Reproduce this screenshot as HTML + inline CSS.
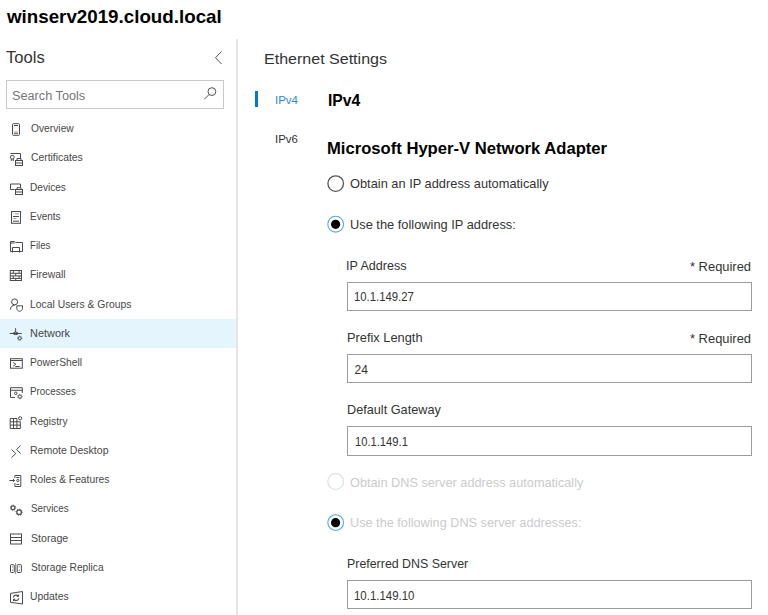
<!DOCTYPE html>
<html><head><meta charset="utf-8">
<style>
html,body{margin:0;padding:0;background:#fff;width:768px;height:615px;overflow:hidden;position:relative}
body{font-family:"Liberation Sans",sans-serif}
.t{position:absolute;white-space:nowrap}
svg{position:absolute;left:0;top:0}
</style></head><body>
<div style="position:absolute;left:0px;top:318.5px;width:236px;height:29.2px;background:#e5f5fe"></div>
<div style="position:absolute;left:236px;top:39px;width:2px;height:576px;background:#e6e6e6"></div>
<div style="position:absolute;left:5.5px;top:79.7px;width:218.5px;height:29px;border:1px solid #c8c8c8;box-sizing:border-box"></div>
<div style="position:absolute;left:255px;top:91px;width:3px;height:16px;background:#0078d4"></div>
<div style="position:absolute;left:347px;top:282px;width:405px;height:29px;border:1px solid #9c9c9c;box-sizing:border-box"></div>
<div style="position:absolute;left:347px;top:354px;width:405px;height:29px;border:1px solid #9c9c9c;box-sizing:border-box"></div>
<div style="position:absolute;left:347px;top:426px;width:405px;height:30px;border:1px solid #9c9c9c;box-sizing:border-box"></div>
<div style="position:absolute;left:347px;top:580px;width:405px;height:29px;border:1px solid #9c9c9c;box-sizing:border-box"></div>
<svg width="768" height="615" viewBox="0 0 768 615">
<path d="M221.5 51.5 L215.5 57.7 L221.5 64" fill="none" stroke="#505050" stroke-width="1.0" />
<circle cx="211.9" cy="91.6" r="3.9" fill="none" stroke="#505050" stroke-width="1.0"/>
<path d="M209.2 94.4 L204.3 99.3" fill="none" stroke="#505050" stroke-width="1.0" />
<circle cx="335.7" cy="183.6" r="7.8" fill="none" stroke="#555" stroke-width="1.3"/>
<circle cx="335.7" cy="224.2" r="7.9" fill="none" stroke="#5aa8e8" stroke-width="1.1"/>
<circle cx="335.6" cy="224.3" r="4.6" fill="#000" stroke="#000" stroke-width="0"/>
<circle cx="335.7" cy="481.6" r="7.9" fill="none" stroke="#e0e0e0" stroke-width="1.2"/>
<circle cx="335.7" cy="522.6" r="7.9" fill="none" stroke="#5aa8e8" stroke-width="1.1"/>
<circle cx="335.6" cy="522.7" r="4.6" fill="#000" stroke="#000" stroke-width="0"/>
<rect x="12.5" y="123.7" width="7" height="11.6" rx="1" fill="none" stroke="#4a4a4a" stroke-width="1"/>
<path d="M14 125.6 H18" fill="none" stroke="#4a4a4a" stroke-width="1" />
<path d="M14 133.3 H18" fill="none" stroke="#4a4a4a" stroke-width="1" />
<path d="M14 131.8 H18" fill="none" stroke="#aaa" stroke-width="1" />
<path d="M10.5 153.5 H20.5 V158.5" fill="none" stroke="#4a4a4a" stroke-width="1" />
<circle cx="12.3" cy="157.2" r="1.9" fill="none" stroke="#4a4a4a" stroke-width="1"/>
<path d="M11.3 159 V161 M13.3 159 V161" fill="none" stroke="#4a4a4a" stroke-width="1" />
<rect x="15.5" y="160.5" width="7" height="5" fill="none" stroke="#4a4a4a" stroke-width="1"/>
<path d="M17 160.5 V158.5 H21 V160.5" fill="none" stroke="#4a4a4a" stroke-width="1" />
<path d="M15.5 163 H22.5" fill="none" stroke="#4a4a4a" stroke-width="1" />
<path d="M14.5 189.5 H10.5 V184 H20.5 V187.5" fill="none" stroke="#4a4a4a" stroke-width="1" />
<rect x="15.5" y="189.5" width="7" height="5" fill="none" stroke="#4a4a4a" stroke-width="1"/>
<path d="M17 189.5 V187.7 H21 V189.5" fill="none" stroke="#4a4a4a" stroke-width="1" />
<path d="M15.5 192 H22.5" fill="none" stroke="#4a4a4a" stroke-width="1" />
<rect x="11.5" y="211.5" width="9" height="11.8" fill="none" stroke="#4a4a4a" stroke-width="1"/>
<path d="M15 213.9 H19" fill="none" stroke="#999" stroke-width="1" />
<path d="M13 213.9 H14" fill="none" stroke="#bbb" stroke-width="1" />
<path d="M13 216.5 H19" fill="none" stroke="#4a4a4a" stroke-width="1" />
<path d="M13.3 218.6 H16.5" fill="none" stroke="#999" stroke-width="1" />
<path d="M13 221.2 H19" fill="none" stroke="#4a4a4a" stroke-width="1" />
<path d="M10.5 251.5 V241.5 H14.5 L15.5 242.5 H22.5 V251.5 Z" fill="none" stroke="#4a4a4a" stroke-width="1" />
<path d="M12.5 252.5 V247.5 H19.5 V252.5" fill="none" stroke="#4a4a4a" stroke-width="1" />
<path d="M10.5 243 H14.5" fill="none" stroke="#4a4a4a" stroke-width="1" />
<rect x="10.3" y="270.5" width="11.2" height="10" fill="none" stroke="#4a4a4a" stroke-width="1"/>
<path d="M10.3 273.3 H21.5 M10.3 275.9 H21.5 M10.3 278.4 H21.5" fill="none" stroke="#4a4a4a" stroke-width="1" />
<path d="M13.3 270.5 V273.3 M19.1 270.5 V273.3 M13.3 275.9 V278.4 M19.1 275.9 V278.4 M15.7 273.3 V275.9 M15.7 278.4 V280.5" fill="none" stroke="#4a4a4a" stroke-width="1" />
<circle cx="14.6" cy="301.9" r="3" fill="none" stroke="#4a4a4a" stroke-width="1"/>
<path d="M10.4 309.6 C10.6 306.8 12.4 305.1 14.8 305.1" fill="none" stroke="#4a4a4a" stroke-width="1" />
<path d="M16.8 305.8 H22.5 V308.5 C22.5 310 21 311 19.6 311.4 C18.2 311 16.8 310 16.8 308.5 Z" fill="none" stroke="#4a4a4a" stroke-width="1" />
<path d="M9.7 333.5 H21.8" fill="none" stroke="#4a4a4a" stroke-width="1" />
<path d="M15.6 328.2 V332" fill="none" stroke="#4a4a4a" stroke-width="1" />
<ellipse cx="15.7" cy="333.4" rx="2.6" ry="1.2" fill="none" stroke="#4a4a4a" stroke-width="1"/>
<circle cx="19.7" cy="338.2" r="1.5" fill="none" stroke="#4a4a4a" stroke-width="1.0"/>
<circle cx="19.7" cy="338.2" r="2.2" fill="none" stroke="#4a4a4a" stroke-width="0.8" stroke-dasharray="0.8 0.93"/>
<rect x="10.5" y="358.7" width="11.8" height="9.5" fill="none" stroke="#4a4a4a" stroke-width="1"/>
<path d="M10.5 360.5 H22.3" fill="none" stroke="#4a4a4a" stroke-width="1" />
<path d="M13.2 362.5 L15.8 364.3 L13.2 366.1" fill="none" stroke="#4a4a4a" stroke-width="1" />
<path d="M15.3 366.5 H19.6" fill="none" stroke="#4a4a4a" stroke-width="1" />
<path d="M15 397.4 H10.5 V387.7 H22.3 V393" fill="none" stroke="#4a4a4a" stroke-width="1" />
<path d="M10.5 390.3 H22.3" fill="none" stroke="#4a4a4a" stroke-width="1" />
<circle cx="15.8" cy="393.3" r="1.3" fill="none" stroke="#4a4a4a" stroke-width="1"/>
<circle cx="19.9" cy="396.6" r="1.6" fill="none" stroke="#4a4a4a" stroke-width="1.0"/>
<circle cx="19.9" cy="396.6" r="2.3" fill="none" stroke="#4a4a4a" stroke-width="0.8" stroke-dasharray="0.8 1.0"/>
<path d="M16.9 418.5 H10.2 V428.5 H20.3 V421.5" fill="none" stroke="#4a4a4a" stroke-width="1" />
<path d="M10.2 421.8 H20.3 M10.2 425.1 H20.3 M13.5 418.5 V428.5 M16.9 418.5 V428.5" fill="none" stroke="#4a4a4a" stroke-width="1" />
<circle cx="20.2" cy="418.3" r="1.6" fill="none" stroke="#4a4a4a" stroke-width="1"/>
<path d="M11.5 449.6 L15.8 453.5 L11.5 457.6" fill="none" stroke="#4a4a4a" stroke-width="1" />
<path d="M20.6 445.5 L16.6 449.5 L20.6 453.6" fill="none" stroke="#4a4a4a" stroke-width="1" />
<path d="M14.9 478 V475.5 H20.8 V486.5 H14.9 V483" fill="none" stroke="#4a4a4a" stroke-width="1" />
<path d="M9.3 480.5 H14.5 M13 479 L14.5 480.5 L13 482" fill="none" stroke="#4a4a4a" stroke-width="1" />
<path d="M16.3 477.5 H19.3 M16.3 484.4 H19.3" fill="none" stroke="#4a4a4a" stroke-width="1" />
<circle cx="17.8" cy="480.5" r="1.1" fill="none" stroke="#4a4a4a" stroke-width="1"/>
<circle cx="13" cy="507.7" r="1.9" fill="none" stroke="#4a4a4a" stroke-width="1.2"/>
<circle cx="13" cy="507.7" r="2.7" fill="none" stroke="#4a4a4a" stroke-width="0.9" stroke-dasharray="0.9 1.22"/>
<circle cx="19.1" cy="512.2" r="2.3" fill="none" stroke="#4a4a4a" stroke-width="1.2"/>
<circle cx="19.1" cy="512.2" r="3.2" fill="none" stroke="#4a4a4a" stroke-width="0.9" stroke-dasharray="1 1.51"/>
<rect x="10.5" y="534" width="11" height="10" fill="none" stroke="#4a4a4a" stroke-width="1"/>
<path d="M10.5 537.5 H21.5 M10.5 540.5 H21.5" fill="none" stroke="#4a4a4a" stroke-width="1" />
<rect x="10.5" y="564.7" width="3.8" height="7.8" rx="0.8" fill="none" stroke="#4a4a4a" stroke-width="1"/>
<rect x="17.2" y="564.7" width="4.2" height="7.8" rx="0.8" fill="none" stroke="#4a4a4a" stroke-width="1"/>
<path d="M15.6 563.2 V574.2" fill="none" stroke="#8a7f96" stroke-width="0.9" />
<path d="M12.4 566.5 V567.3 M12.4 569.7 V570.7 M19.3 566.5 V567.3 M19.3 569.7 V570.7" fill="none" stroke="#555" stroke-width="1" />
<path d="M10.5 593.4 L22.5 591.5 V604 L10.5 602.3 Z" fill="none" stroke="#4a4a4a" stroke-width="1" />
<path d="M13.4 597.3 A2.8 2.8 0 0 1 18.4 596.2 M18.7 598.3 A2.8 2.8 0 0 1 13.7 599.4" fill="none" stroke="#4a4a4a" stroke-width="1.2" />
<path d="M18.6 594.6 V596.4 H16.8 M13.5 601 V599.2 H15.3" fill="none" stroke="#4a4a4a" stroke-width="1" />
</svg>
<div id="t0" class="t" style="left:7.16px;top:5.80px;font-size:18.6px;line-height:21px;color:#000;font-weight:bold;transform:scaleX(1.0085);transform-origin:0 0;">winserv2019.cloud.local</div>
<div id="t1" class="t" style="left:5.54px;top:48.10px;font-size:16.2px;line-height:19px;color:#333;font-weight:normal;transform:scaleX(1.0243);transform-origin:0 0;">Tools</div>
<div id="t2" class="t" style="left:12.11px;top:88.80px;font-size:12.5px;line-height:14px;color:#767676;font-weight:normal;transform:scaleX(1.0160);transform-origin:0 0;">Search Tools</div>
<div id="t3" class="t" style="left:30.50px;top:123.00px;font-size:10.15px;line-height:12px;color:#474747;font-weight:normal;transform:scaleX(1.0129);transform-origin:0 0;">Overview</div>
<div id="t4" class="t" style="left:30.98px;top:152.25px;font-size:10.15px;line-height:12px;color:#474747;font-weight:normal;transform:scaleX(1.0218);transform-origin:0 0;">Certificates</div>
<div id="t5" class="t" style="left:30.46px;top:181.50px;font-size:10.15px;line-height:12px;color:#474747;font-weight:normal;transform:scaleX(0.9967);transform-origin:0 0;">Devices</div>
<div id="t6" class="t" style="left:30.44px;top:210.75px;font-size:10.15px;line-height:12px;color:#474747;font-weight:normal;transform:scaleX(0.9880);transform-origin:0 0;">Events</div>
<div id="t7" class="t" style="left:29.98px;top:240.00px;font-size:10.15px;line-height:12px;color:#474747;font-weight:normal;transform:scaleX(0.9576);transform-origin:0 0;">Files</div>
<div id="t8" class="t" style="left:30.40px;top:269.25px;font-size:10.15px;line-height:12px;color:#474747;font-weight:normal;transform:scaleX(1.0209);transform-origin:0 0;">Firewall</div>
<div id="t9" class="t" style="left:30.38px;top:298.50px;font-size:10.15px;line-height:12px;color:#474747;font-weight:normal;transform:scaleX(1.0233);transform-origin:0 0;">Local Users &amp; Groups</div>
<div id="t10" class="t" style="left:30.34px;top:327.75px;font-size:10.15px;line-height:12px;color:#474747;font-weight:normal;transform:scaleX(1.0794);transform-origin:0 0;">Network</div>
<div id="t11" class="t" style="left:30.40px;top:357.00px;font-size:10.15px;line-height:12px;color:#474747;font-weight:normal;transform:scaleX(1.0158);transform-origin:0 0;">PowerShell</div>
<div id="t12" class="t" style="left:30.48px;top:386.25px;font-size:10.15px;line-height:12px;color:#474747;font-weight:normal;transform:scaleX(0.9691);transform-origin:0 0;">Processes</div>
<div id="t13" class="t" style="left:30.40px;top:415.50px;font-size:10.15px;line-height:12px;color:#474747;font-weight:normal;transform:scaleX(1.0131);transform-origin:0 0;">Registry</div>
<div id="t14" class="t" style="left:30.35px;top:444.75px;font-size:10.15px;line-height:12px;color:#474747;font-weight:normal;transform:scaleX(1.0410);transform-origin:0 0;">Remote Desktop</div>
<div id="t15" class="t" style="left:30.40px;top:474.00px;font-size:10.15px;line-height:12px;color:#474747;font-weight:normal;transform:scaleX(1.0158);transform-origin:0 0;">Roles &amp; Features</div>
<div id="t16" class="t" style="left:30.81px;top:503.25px;font-size:10.15px;line-height:12px;color:#474747;font-weight:normal;transform:scaleX(0.9688);transform-origin:0 0;">Services</div>
<div id="t17" class="t" style="left:30.60px;top:532.50px;font-size:10.15px;line-height:12px;color:#474747;font-weight:normal;transform:scaleX(1.0490);transform-origin:0 0;">Storage</div>
<div id="t18" class="t" style="left:30.67px;top:561.75px;font-size:10.15px;line-height:12px;color:#474747;font-weight:normal;transform:scaleX(1.0079);transform-origin:0 0;">Storage Replica</div>
<div id="t19" class="t" style="left:30.47px;top:591.00px;font-size:10.15px;line-height:12px;color:#474747;font-weight:normal;transform:scaleX(1.0235);transform-origin:0 0;">Updates</div>
<div id="t20" class="t" style="left:263.94px;top:49.70px;font-size:15.2px;line-height:17px;color:#333;font-weight:normal;transform:scaleX(1.0555);transform-origin:0 0;">Ethernet Settings</div>
<div id="t21" class="t" style="left:274.99px;top:93.20px;font-size:11.6px;line-height:13px;color:#2b88d8;font-weight:normal;transform:scaleX(0.9904);transform-origin:0 0;">IPv4</div>
<div id="t22" class="t" style="left:274.71px;top:132.10px;font-size:11.6px;line-height:13px;color:#333;font-weight:normal;transform:scaleX(0.9913);transform-origin:0 0;">IPv6</div>
<div id="t23" class="t" style="left:327.53px;top:90.60px;font-size:16.6px;line-height:19px;color:#000;font-weight:bold;transform:scaleX(0.9456);transform-origin:0 0;">IPv4</div>
<div id="t24" class="t" style="left:327.06px;top:140.30px;font-size:15.9px;line-height:18px;color:#000;font-weight:bold;transform:scaleX(1.0455);transform-origin:0 0;">Microsoft Hyper-V Network Adapter</div>
<div id="t25" class="t" style="left:349.90px;top:177.10px;font-size:12.7px;line-height:15px;color:#333;font-weight:normal;transform:scaleX(1.0105);transform-origin:0 0;">Obtain an IP address automatically</div>
<div id="t26" class="t" style="left:350.14px;top:217.50px;font-size:12.7px;line-height:15px;color:#333;font-weight:normal;transform:scaleX(1.0107);transform-origin:0 0;">Use the following IP address:</div>
<div id="t27" class="t" style="left:346.32px;top:258.90px;font-size:12.4px;line-height:14px;color:#333;font-weight:normal;transform:scaleX(1.0137);transform-origin:0 0;">IP Address</div>
<div id="t28" class="t" style="left:690.13px;top:260.40px;font-size:12.6px;line-height:14px;color:#333;font-weight:normal;transform:scaleX(1.0256);transform-origin:0 0;">* Required</div>
<div id="t29" class="t" style="left:354.46px;top:290.30px;font-size:12.0px;line-height:14px;color:#333;font-weight:normal;transform:scaleX(0.9425);transform-origin:0 0;">10.1.149.27</div>
<div id="t30" class="t" style="left:346.75px;top:331.20px;font-size:12.4px;line-height:14px;color:#333;font-weight:normal;transform:scaleX(1.0343);transform-origin:0 0;">Prefix Length</div>
<div id="t31" class="t" style="left:690.13px;top:332.30px;font-size:12.6px;line-height:14px;color:#333;font-weight:normal;transform:scaleX(1.0256);transform-origin:0 0;">* Required</div>
<div id="t32" class="t" style="left:354.60px;top:362.70px;font-size:12.0px;line-height:14px;color:#333;font-weight:normal;">24</div>
<div id="t33" class="t" style="left:346.66px;top:402.90px;font-size:12.4px;line-height:14px;color:#333;font-weight:normal;transform:scaleX(1.0238);transform-origin:0 0;">Default Gateway</div>
<div id="t34" class="t" style="left:354.53px;top:434.70px;font-size:12.0px;line-height:14px;color:#333;font-weight:normal;transform:scaleX(0.9317);transform-origin:0 0;">10.1.149.1</div>
<div id="t35" class="t" style="left:350.05px;top:475.50px;font-size:12.7px;line-height:15px;color:#cbcbcb;font-weight:normal;transform:scaleX(1.0029);transform-origin:0 0;">Obtain DNS server address automatically</div>
<div id="t36" class="t" style="left:350.05px;top:515.70px;font-size:12.7px;line-height:15px;color:#cbcbcb;font-weight:normal;transform:scaleX(1.0008);transform-origin:0 0;">Use the following DNS server addresses:</div>
<div id="t37" class="t" style="left:346.69px;top:557.00px;font-size:12.4px;line-height:14px;color:#333;font-weight:normal;transform:scaleX(1.0002);transform-origin:0 0;">Preferred DNS Server</div>
<div id="t38" class="t" style="left:354.45px;top:588.90px;font-size:12.0px;line-height:14px;color:#333;font-weight:normal;transform:scaleX(0.9537);transform-origin:0 0;">10.1.149.10</div>
</body></html>
